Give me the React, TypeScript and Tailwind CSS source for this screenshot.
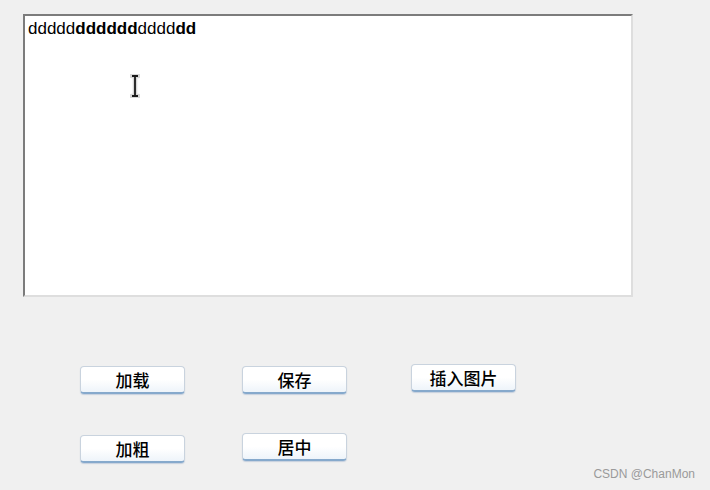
import React from "react";

function Btn({ label, className = "" }: { label: string; className?: string }) {
  return (
    <button
      type="button"
      className={`w-[105px] h-[28px] rounded-[4px] border border-[#c9d3de] border-b-2 border-b-[#86a9cc] bg-gradient-to-b from-white via-white to-[#eef4fa] shadow-[0_1px_1px_rgba(120,150,190,0.35)] text-[17px] font-medium leading-none text-black flex items-center justify-center ${className}`}
      style={{ fontFamily: '"Noto Sans CJK SC", sans-serif' }}
    >
      {label}
    </button>
  );
}

export default function App() {
  return (
    <div
      className="relative w-[710px] h-[490px] bg-[#f0f0f0] overflow-hidden"
      style={{ fontFamily: '"Liberation Sans", "Noto Sans CJK SC", sans-serif' }}
    >
      <div className="pt-[14px] pl-[23px]">
        {/* editor pane */}
        <div className="relative w-[610px] h-[283px] bg-white border-2 border-t-[#7c7c7c] border-l-[#7c7c7c] border-r-[#dedede] border-b-[#dedede]">
          <div className="pl-[3px] pt-[3px] text-[17px] leading-[20px] text-black">
            ddddd<b>dddddd</b>dddd<b>dd</b>
          </div>
          {/* I-beam cursor */}
          <svg className="absolute left-[105px] top-[58px]" width="10" height="24" viewBox="0 0 10 24">
            <path
              d="M1.5 2 H8.5 M5 2 V22 M1.5 22 H8.5"
              stroke="#d8d8d8"
              strokeWidth="4.5"
              strokeLinecap="round"
              fill="none"
            />
            <path
              d="M2 2 H8 M5 2 V22 M2 22 H8"
              stroke="#1a1a1a"
              strokeWidth="1.8"
              fill="none"
            />
          </svg>
        </div>
      </div>

      <div className="pl-[80px] pt-[69px] flex flex-col gap-[41px]">
        <div className="flex items-start">
          <Btn label="加载" />
          <Btn label="保存" className="ml-[57px]" />
          <Btn label="插入图片" className="ml-[64px] -mt-[2px]" />
        </div>
        <div className="flex items-start">
          <Btn label="加粗" />
          <Btn label="居中" className="ml-[57px] -mt-[2px]" />
        </div>
      </div>

      <div className="absolute right-[15px] bottom-[7px] text-[12px] text-[#9a9a9a]">
        CSDN @ChanMon
      </div>
    </div>
  );
}
